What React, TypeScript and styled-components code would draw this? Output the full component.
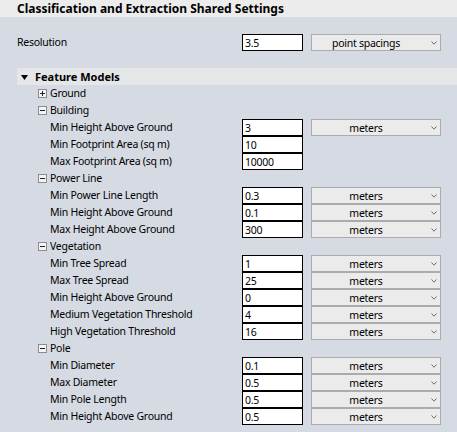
import React from 'react';
import styled, { createGlobalStyle } from 'styled-components';

interface Param {
  label: string;
  value: string;
  unit?: string;
}

interface Group {
  name: string;
  expanded: boolean;
  params: Param[];
}

const groups: Group[] = [
  { name: 'Ground', expanded: false, params: [] },
  {
    name: 'Building',
    expanded: true,
    params: [
      { label: 'Min Height Above Ground', value: '3', unit: 'meters' },
      { label: 'Min Footprint Area (sq m)', value: '10' },
      { label: 'Max Footprint Area (sq m)', value: '10000' },
    ],
  },
  {
    name: 'Power Line',
    expanded: true,
    params: [
      { label: 'Min Power Line Length', value: '0.3', unit: 'meters' },
      { label: 'Min Height Above Ground', value: '0.1', unit: 'meters' },
      { label: 'Max Height Above Ground', value: '300', unit: 'meters' },
    ],
  },
  {
    name: 'Vegetation',
    expanded: true,
    params: [
      { label: 'Min Tree Spread', value: '1', unit: 'meters' },
      { label: 'Max Tree Spread', value: '25', unit: 'meters' },
      { label: 'Min Height Above Ground', value: '0', unit: 'meters' },
      { label: 'Medium Vegetation Threshold', value: '4', unit: 'meters' },
      { label: 'High Vegetation Threshold', value: '16', unit: 'meters' },
    ],
  },
  {
    name: 'Pole',
    expanded: true,
    params: [
      { label: 'Min Diameter', value: '0.1', unit: 'meters' },
      { label: 'Max Diameter', value: '0.5', unit: 'meters' },
      { label: 'Min Pole Length', value: '0.5', unit: 'meters' },
      { label: 'Min Height Above Ground', value: '0.5', unit: 'meters' },
    ],
  },
];

function Chevron() {
  return (
    <ChevronIcon width="6" height="4" viewBox="0 0 6 4">
      <path d="M0.5 0.5 L3 3.2 L5.5 0.5" fill="none" stroke="#707070" strokeWidth="1" />
    </ChevronIcon>
  );
}

function Combo({ unit }: { unit: string }) {
  return (
    <ComboBox>
      <ComboText>{unit}</ComboText>
      <Chevron />
    </ComboBox>
  );
}

function ExpandBox({ expanded }: { expanded: boolean }) {
  return (
    <ExpandIcon width="9" height="9" viewBox="0 0 9 9">
      <rect x="0.5" y="0.5" width="8" height="8" fill="#f4f4f4" stroke="#8c8c8c" />
      <path d="M2 4.5 H7" stroke="#222" strokeWidth="1" />
      {!expanded && <path d="M4.5 2 V7" stroke="#222" strokeWidth="1" />}
    </ExpandIcon>
  );
}

export default function App() {
  return (
    <Page>
      <GlobalStyle />
      <HeaderBar>Classification and Extraction Shared Settings</HeaderBar>

      <ResolutionSection>
        <Row $indent={17}>
          <Label>Resolution</Label>
          <ValueInput defaultValue="3.5" />
          <Combo unit="point spacings" />
        </Row>
      </ResolutionSection>

      <FeatureBar>
        <Triangle width="7" height="5" viewBox="0 0 7 5">
          <path d="M0 0 H7 L3.5 5 Z" fill="#000" />
        </Triangle>
        Feature Models
      </FeatureBar>

      <Tree>
        {groups.map((group) => (
          <React.Fragment key={group.name}>
            <GroupRow>
              <ExpandBox expanded={group.expanded} />
              <Label>{group.name}</Label>
            </GroupRow>
            {group.expanded &&
              group.params.map((param, i) => (
                <Row key={group.name + i} $indent={50}>
                  <Label>{param.label}</Label>
                  <ValueInput defaultValue={param.value} />
                  {param.unit ? <Combo unit={param.unit} /> : <span />}
                </Row>
              ))}
          </React.Fragment>
        ))}
      </Tree>
    </Page>
  );
}

const GlobalStyle = createGlobalStyle`
  html, body {
    margin: 0;
    padding: 0;
    background: #d6dbe3;
  }

  body {
    font-family: "Noto Sans", "Open Sans", sans-serif;
    font-size: 10.5px;
    letter-spacing: -0.25px;
    color: #000;
  }
`;

const Page = styled.main`
  width: 457px;
  min-height: 432px;

  background: #d6dbe3;
`;

const HeaderBar = styled.header`
  height: 17px;

  padding-left: 17px;

  background: #ececec;

  font-size: 12px;
  font-weight: 700;
  letter-spacing: 0;
  line-height: 17px;
  white-space: nowrap;
`;

const ResolutionSection = styled.section`
  padding: 17px 0;
`;

const Row = styled.div<{ $indent: number }>`
  display: grid;
  grid-template-columns: 1fr 61px 130px;
  column-gap: 8px;
  align-items: center;

  height: 17px;

  padding-left: ${({ $indent }) => $indent}px;
  padding-right: 16px;
`;

const Label = styled.span`
  line-height: 17px;
  white-space: nowrap;
`;

const ValueInput = styled.input`
  box-sizing: border-box;
  width: 61px;
  height: 17px;

  margin: 0;
  padding: 0 2px;

  background: #fff;
  border: 1px solid #000;
  border-radius: 0;
  outline: none;

  font: inherit;
  letter-spacing: inherit;
  color: #000;
`;

const ComboBox = styled.div`
  box-sizing: border-box;
  position: relative;

  display: flex;
  align-items: center;
  justify-content: center;

  height: 17px;

  padding-right: 20px;

  background: #ebebeb;
  border: 1px solid #ababab;
`;

const ComboText = styled.span`
  white-space: nowrap;
`;

const ChevronIcon = styled.svg`
  position: absolute;
  right: 3px;
  top: 6px;
`;

const FeatureBar = styled.div`
  display: flex;
  align-items: center;
  gap: 7px;

  height: 17px;

  margin-left: 17px;
  padding-left: 4px;

  background: #e4e6e8;

  font-size: 11px;
  font-weight: 700;
  letter-spacing: 0;
`;

const Triangle = styled.svg`
  flex: none;
  margin-top: 2px;
`;

const Tree = styled.section`
  display: flex;
  flex-direction: column;
`;

const GroupRow = styled.div`
  display: flex;
  align-items: center;
  gap: 3px;

  height: 17px;

  padding-left: 38px;
`;

const ExpandIcon = styled.svg`
  flex: none;
`;
